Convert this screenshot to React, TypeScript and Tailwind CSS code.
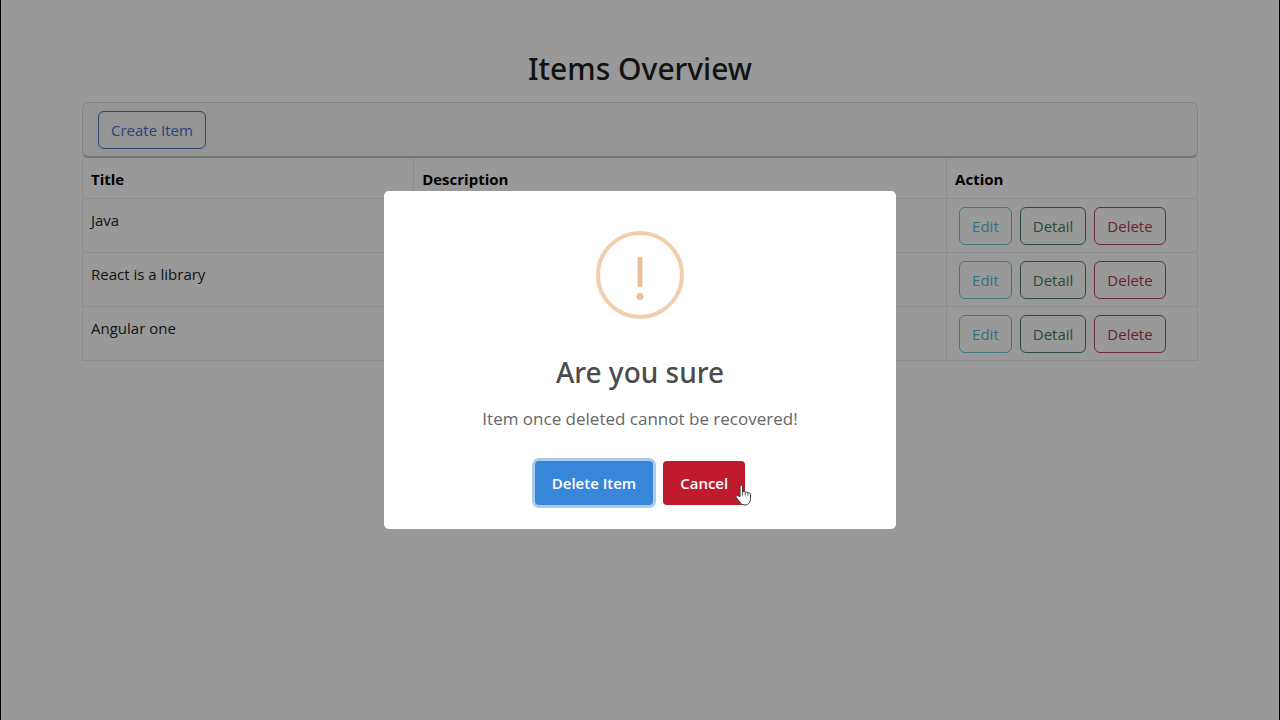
import React from "react";

type Item = { id: number; title: string; description: string };

const items: Item[] = [
  { id: 1, title: "Java", description: "" },
  { id: 2, title: "React is a library", description: "" },
  { id: 3, title: "Angular one", description: "" },
];

const tones = {
  blue: "border-[#5676bc] text-[#4a70d0]",
  cyan: "border-[#6cc8cc] text-[#58bcd2]",
  green: "border-[#4a8068] text-[#3f7f5c]",
  red: "border-[#b04c64] text-[#b0384e]",
};

function OutlineButton({ tone, children }: { tone: keyof typeof tones; children: React.ReactNode }) {
  return (
    <button type="button" className={`h-[38px] rounded-md border px-3 leading-6 ${tones[tone]}`}>
      {children}
    </button>
  );
}

function ItemsPage() {
  return (
    <main className="mx-auto max-w-[1140px] px-3 pt-[49px]">
      <h1 className="text-center font-['Noto_Sans','Open_Sans',sans-serif] text-[30px] leading-10 font-medium text-[#1c1f22]">
        Items Overview
      </h1>
      <div className="mt-[13px] rounded-md border border-b-2 border-[#dcdcdc] border-b-[#c4c4c4] bg-[#f8f8f8] px-[15px] pt-2 pb-[7px]">
        <OutlineButton tone="blue">Create Item</OutlineButton>
      </div>
      <table className="w-full table-fixed border-collapse text-left">
        <colgroup>
          <col className="w-[29.7%]" />
          <col className="w-[47.8%]" />
          <col className="w-[22.5%]" />
        </colgroup>
        <thead>
          <tr className="font-bold text-black">
            <th className="border border-t-0 border-[#e9e9e9] px-2 pt-[9px] pb-[7px] leading-6">Title</th>
            <th className="border border-t-0 border-[#e9e9e9] px-2 pt-[9px] pb-[7px] leading-6">Description</th>
            <th className="border border-t-0 border-[#e9e9e9] px-2 pt-[9px] pb-[7px] leading-6">Action</th>
          </tr>
        </thead>
        <tbody>
          {items.map((item) => (
            <tr key={item.id}>
              <td className="border border-[#e9e9e9] px-2 pt-[9px] pb-[7px] align-top leading-6">{item.title}</td>
              <td className="border border-[#e9e9e9] px-2 pt-[9px] pb-[7px] align-top leading-6">{item.description}</td>
              <td className="border border-[#e9e9e9] px-3 pt-2 pb-[7px]">
                <div className="flex gap-2">
                  <OutlineButton tone="cyan">Edit</OutlineButton>
                  <OutlineButton tone="green">Detail</OutlineButton>
                  <OutlineButton tone="red">Delete</OutlineButton>
                </div>
              </td>
            </tr>
          ))}
        </tbody>
      </table>
    </main>
  );
}

function HandCursor() {
  return (
    <svg
      aria-hidden="true"
      viewBox="0 0 17 22"
      className="pointer-events-none absolute -right-[7px] -bottom-px h-[22px] w-[17px]"
    >
      <path
        d="M5 12.5V2.8C5 .6 7.6.6 7.6 2.8V8c.4-1 2.5-.9 2.7.5.6-.8 2.4-.6 2.6.7.7-.7 2.6-.4 2.6 1.3v4c0 3.600-2 6.500-5.500 6.500-3 0-4.500-1.500-5.500-3.200L1.300 13.600C.5 12 2.200 11 3.400 12z"
        fill="#fff"
        stroke="#333"
        strokeWidth="1"
        strokeLinejoin="round"
      />
      <path d="M7.600 8v3.500M10.300 8.500v3M12.900 9.200v2.600" stroke="#333" strokeWidth=".8" fill="none" />
    </svg>
  );
}

function ConfirmDialog() {
  return (
    <div className="fixed inset-0 flex items-center justify-center border-x border-black bg-black/40">
      <div
        role="dialog"
        aria-modal="true"
        aria-labelledby="confirm-title"
        aria-describedby="confirm-text"
        className="flex w-full max-w-[512px] flex-col items-center rounded-[5px] bg-white px-4 pt-10 pb-6 text-center"
      >
        <svg aria-hidden="true" viewBox="0 0 88 88" className="size-[88px]">
          <circle cx="44" cy="44" r="42" fill="none" stroke="#f2cdae" strokeWidth="4" />
          <rect x="41.500" y="26" width="5" height="30" rx="1" fill="#ecbf9c" />
          <circle cx="44" cy="65.500" r="3.500" fill="#ecbf9c" />
        </svg>
        <h2
          id="confirm-title"
          className="mt-[31px] font-['Noto_Sans','Open_Sans',sans-serif] text-[28px] leading-11 font-medium text-[#4c4c4c]"
        >
          Are you sure
        </h2>
        <p id="confirm-text" className="mt-[13px] text-[17px] leading-6 text-[#666666]">
          Item once deleted cannot be recovered!
        </p>
        <div className="mt-[30px] flex gap-[10px] font-semibold text-white">
          <button type="button" className="h-11 rounded bg-[#3886d9] px-[17px] ring-3 ring-[#aecbea]">
            Delete Item
          </button>
          <div className="relative">
            <button type="button" className="h-11 rounded bg-[#c01a2e] px-[17px]">
              Cancel
            </button>
            <HandCursor />
          </div>
        </div>
      </div>
    </div>
  );
}

export default function App() {
  return (
    <div className="min-h-screen bg-white font-['Open_Sans','Noto_Sans',sans-serif] text-[15px] text-[#212529]">
      <ItemsPage />
      <ConfirmDialog />
    </div>
  );
}
